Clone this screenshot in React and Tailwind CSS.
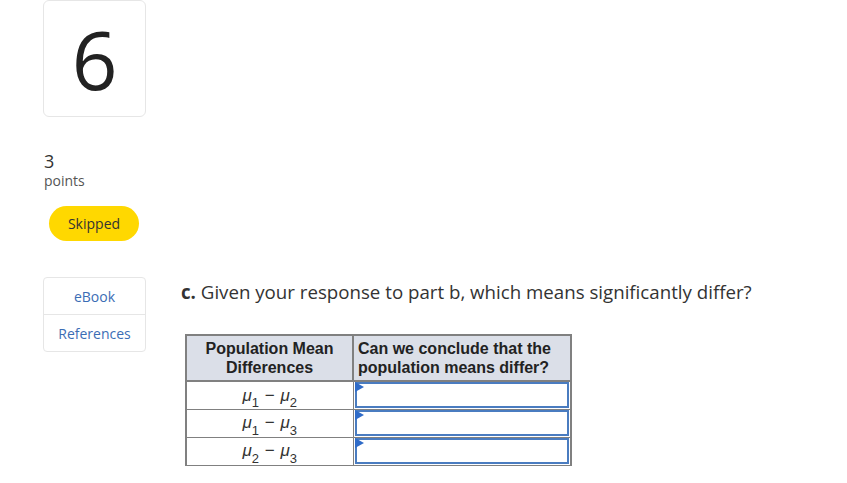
import React from 'react';

const Mu = ({ sub }) => (
  <span className="italic">
    μ<sub className="not-italic text-[13px] align-[-3px]">{sub}</sub>
  </span>
);

const AnswerBox = () => (
  <div className="relative h-[26px] border-2 border-[#4a7cc0] bg-white">
    <svg className="absolute -left-[2px] -top-[2px] w-[9px] h-[10px]" viewBox="0 0 9 10">
      <path d="M0 0 L9 5 L0 10 Z" fill="#2f6bc8" />
    </svg>
  </div>
);

export default function App() {
  const rows = [
    ['1', '2'],
    ['1', '3'],
    ['2', '3'],
  ];

  return (
    <div className="w-[847px] h-[483px] bg-white flex font-['Open_Sans',sans-serif] text-[#333]">
      <div className="w-[146px] pl-[43px] flex flex-col">
        <div className="w-[103px] h-[117px] border border-[#e6e6e6] rounded-[6px] flex items-center justify-center text-[80px] leading-none text-[#222]">
          6
        </div>
        <div className="mt-[33px] pl-[1px] text-[18px] leading-[22px] text-[#333]">3</div>
        <div className="pl-[1px] text-[14px] leading-[18px] text-[#555]">points</div>
        <div className="mt-[16px] ml-[6px] w-[90px] h-[35px] rounded-full bg-[#ffd800] flex items-center justify-center text-[14px] text-[#333]">
          Skipped
        </div>
        <div className="mt-[36px] w-[103px] border border-[#e6e6e6] rounded-[4px] flex flex-col text-[14px] text-[#3b6db5]">
          <div className="h-[37px] flex items-center justify-center border-b border-[#e6e6e6]">eBook</div>
          <div className="h-[36px] flex items-center justify-center">References</div>
        </div>
      </div>

      <div className="pl-[35px] pt-[280px] flex flex-col">
        <p className="text-[18.7px] leading-[24px] text-[#333]">
          <span className="font-bold">c.</span> Given your response to part b, which means significantly differ?
        </p>
        <table className="mt-[30px] ml-[4px] w-[385px] table-fixed border-collapse font-['Liberation_Sans',Arial,sans-serif] text-[16px] text-[#222]">
          <colgroup>
            <col className="w-[167px]" />
            <col className="w-[218px]" />
          </colgroup>
          <thead>
            <tr className="bg-[#dbdfe8]">
              <th className="h-[46px] border-2 border-[#808080] font-bold leading-[19px] text-center">
                Population Mean<br />Differences
              </th>
              <th className="h-[46px] border-2 border-[#808080] font-bold leading-[19px] text-left pl-[4px]">
                Can we conclude that the<br />population means differ?
              </th>
            </tr>
          </thead>
          <tbody>
            {rows.map(([a, b]) => (
              <tr key={a + b}>
                <td className="h-[28px] border border-[#808080] border-l-2 text-center text-[17px] text-[#333]">
                  <Mu sub={a} /> <span className="mx-[1px]">−</span> <Mu sub={b} />
                </td>
                <td className="h-[28px] border border-[#808080] border-r-2 p-0 pl-[1px] pr-[1px]">
                  <AnswerBox />
                </td>
              </tr>
            ))}
          </tbody>
        </table>
      </div>
    </div>
  );
}
